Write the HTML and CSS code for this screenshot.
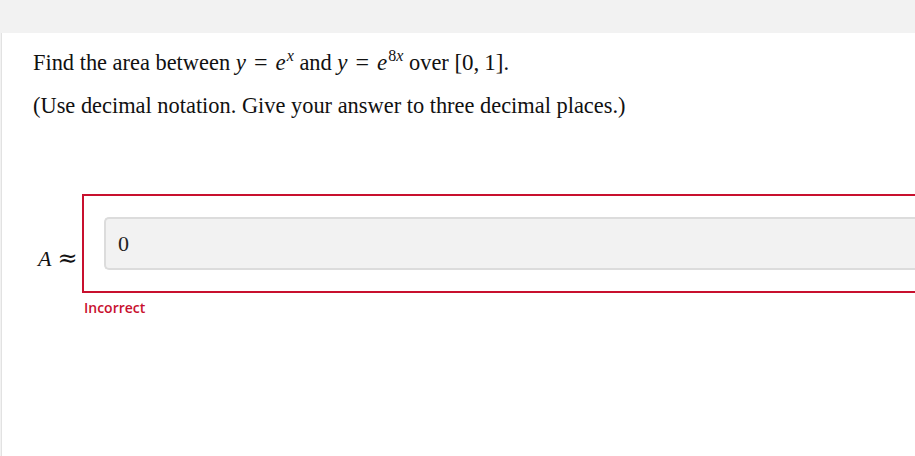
FILE: index.html
```html
<!DOCTYPE html>
<html>
<head>
<meta charset="utf-8">
<link rel="stylesheet" href="styles.css">
</head>
<body>
<div class="panel">
  <p class="q">Find the area between <span class="m"><i>y</i><span class="op">=</span><i>e</i><sup><i>x</i></sup></span> and <span class="m"><i>y</i><span class="op">=</span><i>e</i><sup>8<i>x</i></sup></span> over <span class="m">[0,<span class="thin"></span>1]</span>.</p>
  <p class="q hint">(Use decimal notation. Give your answer to three decimal places.)</p>
  <div class="answer">
    <div class="label"><i>A</i><span class="approx">≈</span></div>
    <div class="field">
      <div class="box">
        <div class="input">0</div>
      </div>
      <div class="msg">Incorrect</div>
    </div>
  </div>
</div>
</body>
</html>
```
FILE: styles.css
```css
html, body {
  margin: 0;
  padding: 0;
  background: #f2f2f2;
  overflow: hidden;
  height: 456px;
}
.panel {
  margin: 33px 0 0 1px;
  border-left: 1px solid #e2e2e2;
  background: #fff;
  height: 423px;
  padding: 17px 0 0 31px;
  font-family: "Liberation Serif", serif;
  color: #111;
}
.q {
  margin: 0;
  font-size: 22.4px;
  line-height: 25px;
  white-space: nowrap;
}
.hint {
  margin-top: 18px;
}
.m {
  font-size: 23px;
}
.op {
  font-size: 24px;
  margin: 0 8px;
}
.thin {
  display: inline-block;
  width: 5px;
}
sup {
  font-size: 16px;
  vertical-align: 9px;
  line-height: 0;
  margin-left: 1px;
}
.answer {
  margin-top: 76px;
  display: flex;
  align-items: flex-start;
}
.label {
  flex: none;
  white-space: nowrap;
  font-size: 22px;
  line-height: 25px;
  padding: 52px 0 0 5px;
  width: 44px;
}
.approx {
  font-family: "DejaVu Serif", serif;
  font-size: 24px;
  margin-left: 6px;
}
.field {
  flex: 1;
  min-width: 0;
}
.box {
  border: 2px solid #c8102e;
  border-right: none;
  padding: 21px 0 21px 20px;
}
.input {
  height: 49px;
  background: #f2f2f2;
  border: 2px solid #dcdcdc;
  border-right: none;
  border-radius: 5px 0 0 5px;
  display: flex;
  align-items: center;
  padding-left: 12px;
  font-size: 22px;
  color: #222;
}
.msg {
  margin-top: 5px;
  margin-left: 2px;
  font-family: "Open Sans", sans-serif;
  font-size: 14px;
  font-weight: 600;
  line-height: 19px;
  color: #c8102e;
}
```
